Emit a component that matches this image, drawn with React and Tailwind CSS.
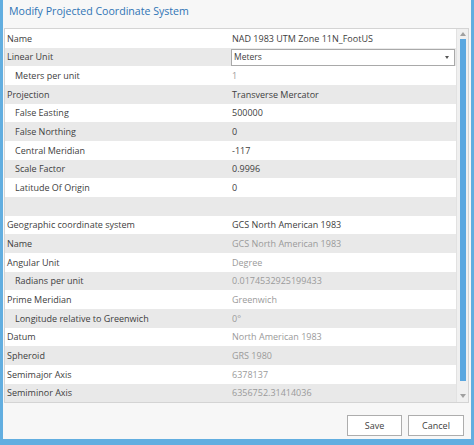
import React from "react";

const rows = [
  { l: "Name", v: "NAD 1983 UTM Zone 11N_FootUS" },
  { l: "Linear Unit", v: "Meters", dd: true },
  { l: "Meters per unit", v: "1", ind: true, g: true },
  { l: "Projection", v: "Transverse Mercator" },
  { l: "False Easting", v: "500000", ind: true },
  { l: "False Northing", v: "0", ind: true },
  { l: "Central Meridian", v: "-117", ind: true },
  { l: "Scale Factor", v: "0.9996", ind: true },
  { l: "Latitude Of Origin", v: "0", ind: true },
  { l: "", v: "" },
  { l: "Geographic coordinate system", v: "GCS North American 1983" },
  { l: "Name", v: "GCS North American 1983", g: true },
  { l: "Angular Unit", v: "Degree", g: true },
  { l: "Radians per unit", v: "0.0174532925199433", ind: true, g: true },
  { l: "Prime Meridian", v: "Greenwich", g: true },
  { l: "Longitude relative to Greenwich", v: "0°", ind: true, g: true },
  { l: "Datum", v: "North American 1983", g: true },
  { l: "Spheroid", v: "GRS 1980", g: true },
  { l: "Semimajor Axis", v: "6378137", g: true },
  { l: "Semiminor Axis", v: "6356752.31414036", g: true },
];

export default function App() {
  return (
    <div
      className="w-[474px] h-[445px] bg-[#62aee0] p-[3px] pt-0 flex"
      style={{ fontFamily: "'Open Sans', 'Noto Sans', sans-serif" }}
    >
      <div className="flex-1 bg-[#f7f7f7] flex flex-col">
        <div className="h-[28px] flex items-center pl-[6px] pb-[4px] text-[10.6px] text-[#2f74b5]">
          Modify Projected Coordinate System
        </div>
        <div className="ml-[1px] mr-[2px] border border-[#d4d4d4] bg-white flex">
          <div className="flex-1">
            {rows.map((r, i) => (
              <div
                key={i}
                className={`h-[18.68px] flex items-center text-[9px] ${i % 2 ? "bg-[#e9e9e9]" : "bg-white"}`}
              >
                <div className={`w-[226px] text-[#404040] ${r.ind ? "pl-[10px]" : "pl-[2px]"}`}>{r.l}</div>
                {r.dd ? (
                  <div className="flex-1 h-[17px] border border-[#a9a9a9] bg-white flex items-center justify-between pl-[2px] pr-[5px] mr-[1px]">
                    <span className="text-[8.5px] text-[#404040]">{r.v}</span>
                    <span className="w-0 h-0 border-l-[2px] border-r-[2px] border-t-[3px] border-l-transparent border-r-transparent border-t-[#555]" />
                  </div>
                ) : (
                  <div className={`flex-1 pl-[1px] ${r.g ? "text-[#9a9a9a]" : "text-[#404040]"}`}>{r.v}</div>
                )}
              </div>
            ))}
          </div>
          <div className="w-[12px] bg-[#f0f0f0] border-l border-[#e2e2e2] flex flex-col items-center py-[2px]">
            <span className="w-0 h-0 border-l-[3px] border-r-[3px] border-b-[4px] border-l-transparent border-r-transparent border-b-[#a0a0a0] mt-[1px]" />
            <div className="w-[6px] h-[342px] bg-[#5aa7e0] mt-[3px]" />
            <div className="flex-1" />
            <span className="w-0 h-0 border-l-[3px] border-r-[3px] border-t-[4px] border-l-transparent border-r-transparent border-t-[#a0a0a0] mb-[2px]" />
          </div>
        </div>
        <div className="flex-1 flex items-start justify-end gap-[6px] pr-[7px] pt-[12px]">
          <button className="w-[55px] h-[21px] border border-[#adadad] bg-white text-[9px] text-[#404040]">Save</button>
          <button className="w-[56px] h-[21px] border border-[#adadad] bg-white text-[9px] text-[#404040]">Cancel</button>
        </div>
        <div className="h-[3px] bg-[#62aee0] -mx-[3px]" />
      </div>
    </div>
  );
}
